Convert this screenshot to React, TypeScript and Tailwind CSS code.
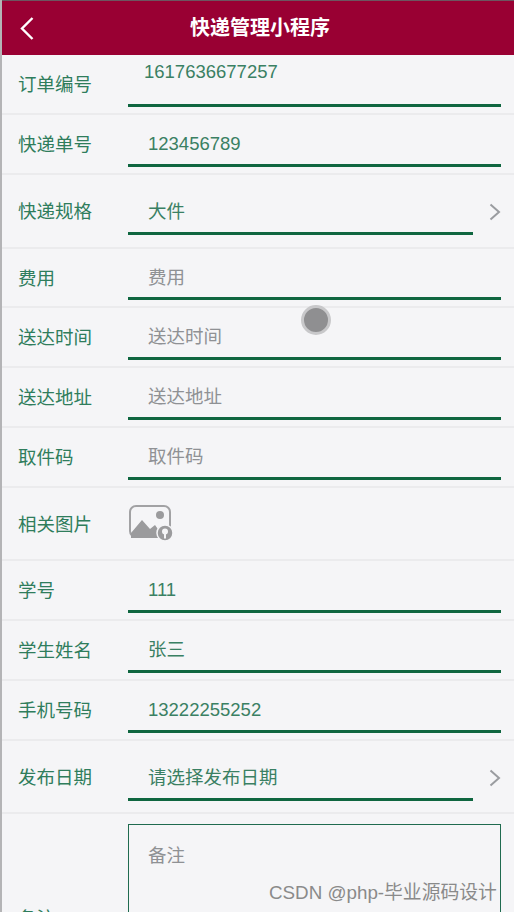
const font = '[font-family:"Liberation_Sans","Noto_Sans_CJK_SC",sans-serif]';

interface RowProps {
  label: string;
  value?: string;
  placeholder?: string;
  select?: boolean;
  height: string;
  labelClass: string;
  valueClass: string;
  lineClass: string;
}

function Chevron({ className }: { className: string }) {
  return (
    <svg className={className} width="12" height="18" viewBox="0 0 12 18" fill="none" stroke="#9a9ca0" strokeWidth="2">
      <path d="M1.5 1.5 L10 9 L1.5 16.5" />
    </svg>
  );
}

function Row({ label, value, placeholder, select, height, labelClass, valueClass, lineClass }: RowProps) {
  return (
    <div className={`relative flex border-b-2 border-[#ebebed] ${height}`}>
      <div className={`w-[128px] pl-[18px] text-[18.5px] leading-[26px] text-[#2f7d5c] ${labelClass}`}>{label}</div>
      <div className={`flex-none ${select ? 'w-[345px]' : 'w-[373px]'}`}>
        <div className={`border-b-[3px] border-[#0f6640] ${lineClass}`}>
          <div className={`text-[18.5px] leading-[26px] ${value ? 'text-[#3a8063]' : 'text-[#8f9194]'} ${valueClass}`}>
            {value ?? placeholder}
          </div>
        </div>
      </div>
      {select && <Chevron className="ml-[16px] mt-[28px] flex-none" />}
    </div>
  );
}

export default function App() {
  return (
    <div className={`relative h-[912px] w-[514px] overflow-hidden border-l-2 border-[#b4b4b6] bg-[#f5f5f7] ${font}`}>
      <header className="flex h-[55px] items-center border-t border-[#6d5560] bg-[#990033]">
        <svg className="ml-[17px] flex-none" width="16" height="24" viewBox="0 0 16 24" fill="none" stroke="#ffffff" strokeWidth="2.4">
          <path d="M13.5 2 L3 12.5 L13.5 23" />
        </svg>
        <div className="ml-[155px] text-[20px] font-bold text-white">快递管理小程序</div>
      </header>

      <div className="-ml-[2px]">
        <Row label="订单编号" value="1617636677257" height="h-[60px]" labelClass="pt-[17px]" valueClass="pl-[16px]" lineClass="h-[52px] pt-[4px]" />
        <Row label="快递单号" value="123456789" height="h-[60px]" labelClass="pt-[17px]" valueClass="pl-[20px]" lineClass="h-[52px] pt-[16px]" />
        <Row label="快递规格" value="大件" select height="h-[74px]" labelClass="pt-[24px]" valueClass="pl-[20px]" lineClass="h-[60px] pt-[24px]" />
        <Row label="费用" placeholder="费用" height="h-[59px]" labelClass="pt-[17px]" valueClass="pl-[20px]" lineClass="h-[51px] pt-[16px]" />
        <Row label="送达时间" placeholder="送达时间" height="h-[60px]" labelClass="pt-[17px]" valueClass="pl-[20px]" lineClass="h-[52px] pt-[16px]" />
        <Row label="送达地址" placeholder="送达地址" height="h-[60px]" labelClass="pt-[17px]" valueClass="pl-[20px]" lineClass="h-[52px] pt-[16px]" />
        <Row label="取件码" placeholder="取件码" height="h-[60px]" labelClass="pt-[17px]" valueClass="pl-[20px]" lineClass="h-[52px] pt-[16px]" />

        <div className="flex h-[73px] border-b-2 border-[#ebebed]">
          <div className="w-[128px] pl-[18px] pt-[24px] text-[18.5px] leading-[26px] text-[#2f7d5c]">相关图片</div>
          <svg className="mt-[16px]" width="46" height="38" viewBox="0 0 46 38">
            <rect x="2" y="2" width="40" height="31" rx="6" fill="none" stroke="#a2a2a4" strokeWidth="2" />
            <path d="M3 34 V29 L14 16 L22 25 L27 21 L36 34 Z" fill="#9b9b9d" />
            <circle cx="32" cy="11" r="4" fill="#9b9b9d" />
            <circle cx="37" cy="29" r="8" fill="#9b9b9d" stroke="#f5f5f7" strokeWidth="1.5" />
            <circle cx="37" cy="27.5" r="3" fill="#f5f5f7" />
            <rect x="36" y="28" width="2" height="6.5" fill="#f5f5f7" />
          </svg>
        </div>

        <Row label="学号" value="111" height="h-[60px]" labelClass="pt-[17px]" valueClass="pl-[20px]" lineClass="h-[52px] pt-[16px]" />
        <Row label="学生姓名" value="张三" height="h-[60px]" labelClass="pt-[17px]" valueClass="pl-[20px]" lineClass="h-[52px] pt-[16px]" />
        <Row label="手机号码" value="13222255252" height="h-[60px]" labelClass="pt-[17px]" valueClass="pl-[20px]" lineClass="h-[52px] pt-[16px]" />
        <Row label="发布日期" placeholder="请选择发布日期" select height="h-[73px]" labelClass="pt-[24px]" valueClass="pl-[20px] !text-[#3a8063]" lineClass="h-[60px] pt-[24px]" />

        <div className="flex h-[160px]">
          <div className="w-[128px] pl-[18px] pt-[92px] text-[18.5px] leading-[26px] text-[#2f7d5c]">备注</div>
          <div className="mt-[10px] h-[140px] w-[373px] border-[1.5px] border-[#1f6b4f] pl-[19px] pt-[18px] text-[18.5px] leading-[26px] text-[#8f9194]">
            备注
          </div>
        </div>
      </div>

      <div className="absolute left-[299px] top-[305px] h-[30px] w-[30px] rounded-full border-[3px] border-[#c8c8ca] bg-[#8f8f91]" />
      <div className="absolute left-[267px] top-[880px] text-[18.8px] leading-[26px] text-[#8a8a8a]">CSDN @php-毕业源码设计</div>
    </div>
  );
}
